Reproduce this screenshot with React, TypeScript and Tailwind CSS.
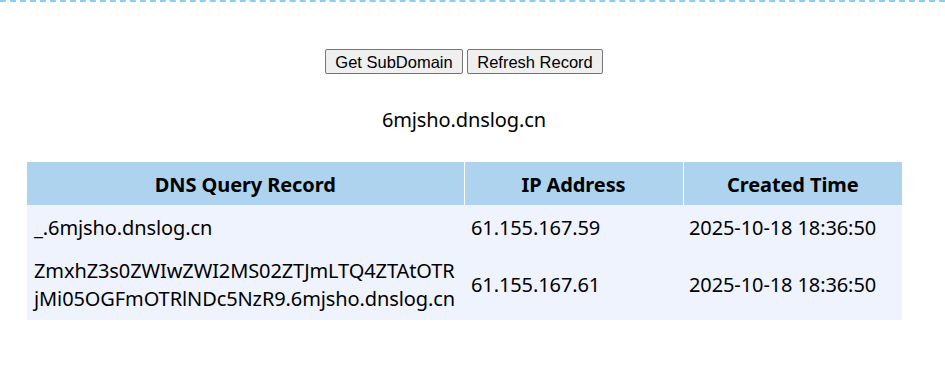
export default function App() {
  const records = [
    { name: ["_.6mjsho.dnslog.cn"], ip: "61.155.167.59", time: "2025-10-18 18:36:50" },
    {
      name: ["ZmxhZ3s0ZWIwZWI2MS02ZTJmLTQ4ZTAtOTR", "jMi05OGFmOTRlNDc5NzR9.6mjsho.dnslog.cn"],
      ip: "61.155.167.61",
      time: "2025-10-18 18:36:50",
    },
  ];

  return (
    <div className="w-[945px] h-[389px] bg-white text-black">
      {/* top dashed rule */}
      <div className="border-t-2 border-dashed border-[#87cefa]" />

      <div className="w-[928px]">
        {/* actions */}
        <div className="flex justify-center gap-[4px] pt-[47px] font-['Liberation_Sans',Arial,sans-serif] text-[16.5px]">
          <button className="w-[138px] h-[25px] leading-[18px] bg-[#efefef] border border-[#767676] rounded-[2px]">
            Get SubDomain
          </button>
          <button className="w-[136px] h-[25px] leading-[18px] bg-[#efefef] border border-[#767676] rounded-[2px]">
            Refresh Record
          </button>
        </div>

        {/* current subdomain */}
        <p className="mt-[32px] text-center font-['Noto_Sans',sans-serif] text-[20px] leading-[28px] tracking-[-0.1px]">
          6mjsho.dnslog.cn
        </p>

        {/* records */}
        <div className="px-[27px] mt-[28px]">
          <table className="w-[875px] table-fixed border-collapse bg-[#eef3fe] font-['Noto_Sans',sans-serif] text-[20px] tracking-[-0.1px]">
            <colgroup>
              <col className="w-[437px]" />
              <col className="w-[219px]" />
              <col className="w-[219px]" />
            </colgroup>
            <thead>
              <tr className="h-[43px] bg-[#aed3ee]">
                <th className="pt-[2px] font-bold text-center border-r border-white">DNS Query Record</th>
                <th className="pt-[2px] font-bold text-center border-r border-white">IP Address</th>
                <th className="pt-[2px] font-bold text-center">Created Time</th>
              </tr>
            </thead>
            <tbody>
              {records.map((r, i) => (
                <tr key={i} className={i === 0 ? "h-[45px]" : "h-[70px]"}>
                  <td className="pl-[7px] leading-[28px] align-middle">
                    {r.name.map((line) => (
                      <div key={line}>{line}</div>
                    ))}
                  </td>
                  <td className="pl-[7px] leading-[28px] align-middle">{r.ip}</td>
                  <td className="pl-[6px] leading-[28px] align-middle">{r.time}</td>
                </tr>
              ))}
            </tbody>
          </table>
        </div>
      </div>
    </div>
  );
}
